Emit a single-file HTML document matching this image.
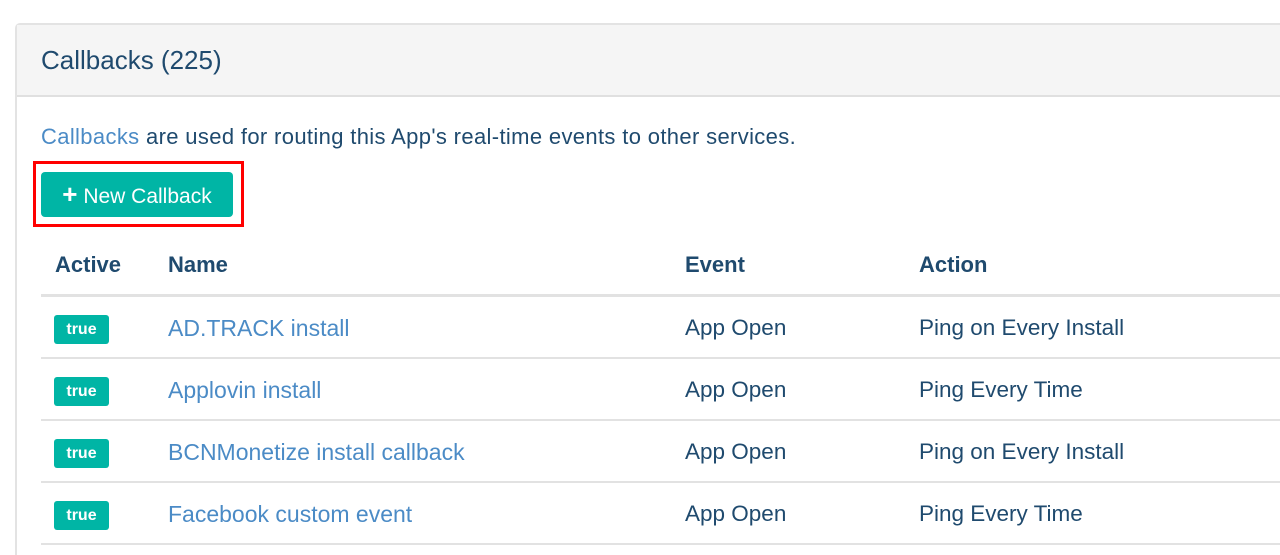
<!DOCTYPE html>
<html style="height:555px;overflow:hidden"><head><style>
body{margin:0;width:1280px;height:555px;overflow:hidden;position:relative;background:#fff;font-family:"Liberation Sans",sans-serif;color:#1f4a6e;}
.panel{position:absolute;left:15px;top:23px;width:1300px;height:532px;border:2px solid #e3e3e3;border-bottom:none;border-radius:5px 5px 0 0;box-sizing:border-box;}
.hd{height:70px;background:#f5f5f5;border-bottom:2px solid #e0e0e0;}
.t{position:absolute;font-size:26px;left:24px;top:20px;}
.abs{position:absolute;white-space:nowrap;}
a{color:#4b8bc6;text-decoration:none}
.btn{position:absolute;left:41px;top:172px;width:192px;height:45px;background:#00b5a5;border-radius:4px;color:#fff;font-size:21px;line-height:45px;text-align:center;}
.red{position:absolute;left:33px;top:161px;width:205px;height:60px;border:3px solid #f00;}
.line{position:absolute;left:41px;width:1239px;background:#e2e2e2;height:2px;}
.b{position:absolute;left:54px;width:55px;height:29px;background:#00b5a5;border-radius:3px;color:#fff;font-weight:bold;font-size:16px;line-height:29px;text-align:center;}
.r{font-size:22.5px;}
.h{font-size:22px;font-weight:bold;}
a.l{font-size:23px}
</style></head><body>
<div class="panel"><div class="hd"></div><div class="t">Callbacks (225)</div></div>
<div class="abs" style="left:41px;top:124px;font-size:22px;letter-spacing:0.35px"><a>Callbacks</a> are used for routing this App's real-time events to other services.</div>
<div class="red"></div>
<div class="btn"><b style="font-size:26px">+</b> New Callback</div>
<div class="abs h" style="left:55px;top:252px">Active</div>
<div class="abs h" style="left:168px;top:252px">Name</div>
<div class="abs h" style="left:685px;top:252px">Event</div>
<div class="abs h" style="left:919px;top:252px">Action</div>
<div class="line" style="top:294px;height:3px"></div>

<div class="b" style="top:315px">true</div>
<div class="abs r" style="left:168px;top:315px"><a class="l">AD.TRACK install</a></div>
<div class="abs r" style="left:685px;top:315px">App Open</div>
<div class="abs r" style="left:919px;top:315px">Ping on Every Install</div>
<div class="line" style="top:357px"></div>

<div class="b" style="top:377px">true</div>
<div class="abs r" style="left:168px;top:377px"><a class="l">Applovin install</a></div>
<div class="abs r" style="left:685px;top:377px">App Open</div>
<div class="abs r" style="left:919px;top:377px">Ping Every Time</div>
<div class="line" style="top:419px"></div>

<div class="b" style="top:439px">true</div>
<div class="abs r" style="left:168px;top:439px"><a class="l">BCNMonetize install callback</a></div>
<div class="abs r" style="left:685px;top:439px">App Open</div>
<div class="abs r" style="left:919px;top:439px">Ping on Every Install</div>
<div class="line" style="top:481px"></div>

<div class="b" style="top:501px">true</div>
<div class="abs r" style="left:168px;top:501px"><a class="l">Facebook custom event</a></div>
<div class="abs r" style="left:685px;top:501px">App Open</div>
<div class="abs r" style="left:919px;top:501px">Ping Every Time</div>
<div class="line" style="top:543px"></div>
</body></html>
